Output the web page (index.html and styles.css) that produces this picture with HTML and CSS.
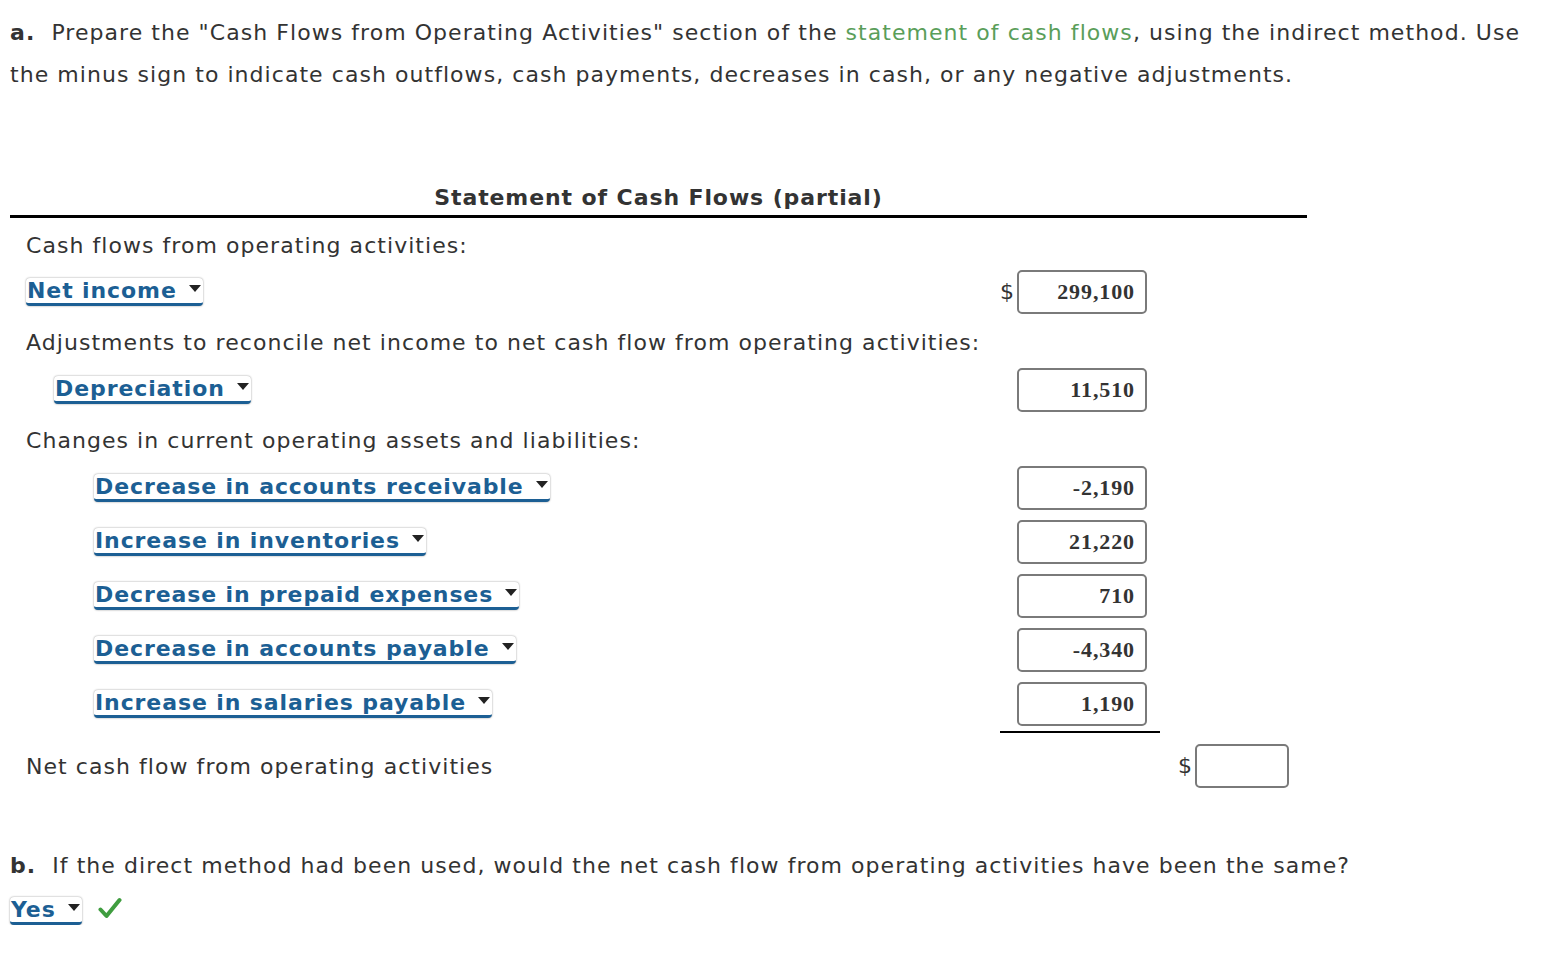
FILE: index.html
```html
<!DOCTYPE html>
<html>
<head>
<meta charset="utf-8">
<link rel="stylesheet" href="styles.css">
</head>
<body>
<div class="page">
  <p class="intro"><b>a.</b>&nbsp; Prepare the "Cash Flows from Operating Activities" section of the <span class="term">statement of cash flows</span>, using the indirect method. Use<br>the minus sign to indicate cash outflows, cash payments, decreases in cash, or any negative adjustments.</p>

  <div class="statement">
    <div class="title">Statement of Cash Flows (partial)</div>
    <div class="sheet">
      <div class="row head first"><div class="label">Cash flows from operating activities:</div></div>

      <div class="row item">
        <div class="label"><span class="dd">Net income <i class="arrow"></i></span></div>
        <div class="dollar">$</div>
        <div class="box">299,100</div>
      </div>

      <div class="row head"><div class="label">Adjustments to reconcile net income to net cash flow from operating activities:</div></div>

      <div class="row item">
        <div class="label ind1"><span class="dd">Depreciation <i class="arrow"></i></span></div>
        <div class="dollar"></div>
        <div class="box">11,510</div>
      </div>

      <div class="row head"><div class="label">Changes in current operating assets and liabilities:</div></div>

      <div class="row item">
        <div class="label ind2"><span class="dd">Decrease in accounts receivable <i class="arrow"></i></span></div>
        <div class="dollar"></div>
        <div class="box">-2,190</div>
      </div>
      <div class="row item">
        <div class="label ind2"><span class="dd">Increase in inventories <i class="arrow"></i></span></div>
        <div class="dollar"></div>
        <div class="box">21,220</div>
      </div>
      <div class="row item">
        <div class="label ind2"><span class="dd">Decrease in prepaid expenses <i class="arrow"></i></span></div>
        <div class="dollar"></div>
        <div class="box">710</div>
      </div>
      <div class="row item">
        <div class="label ind2"><span class="dd">Decrease in accounts payable <i class="arrow"></i></span></div>
        <div class="dollar"></div>
        <div class="box">-4,340</div>
      </div>
      <div class="row item last">
        <div class="label ind2"><span class="dd">Increase in salaries payable <i class="arrow"></i></span></div>
        <div class="dollar"></div>
        <div class="box">1,190</div>
      </div>
      <div class="rule"></div>

      <div class="row total">
        <div class="label">Net cash flow from operating activities</div>
        <div class="dollar"></div>
        <div class="boxspace"></div>
        <div class="gapcol"></div>
        <div class="dollar">$</div>
        <div class="box small"></div>
      </div>
    </div>
  </div>

  <p class="partb"><b>b.</b>&nbsp; If the direct method had been used, would the net cash flow from operating activities have been the same?</p>
  <div class="answer">
    <span class="dd">Yes <i class="arrow"></i></span>
    <svg class="check" width="24" height="22" viewBox="0 0 24 22"><path d="M2.5 12.5 L8.5 19 L21.5 3" fill="none" stroke="#3f9d3f" stroke-width="4" stroke-linecap="round" stroke-linejoin="round"/></svg>
  </div>
</div>
</body>
</html>
```

FILE: styles.css
```css
html, body {
  margin: 0;
  padding: 0;
  background: #fff;
}
body {
  font-family: "DejaVu Sans", Verdana, sans-serif;
  font-size: 22px;
  letter-spacing: 1.05px;
  color: #333;
}
.page {
  padding: 12px 10px 0 10px;
}
.intro {
  margin: 0;
  line-height: 42px;
  width: 1527px;
  white-space: nowrap;
}
.term {
  color: #5a9e5a;
}
.statement {
  margin-top: 88px;
  width: 1297px;
}
.title {
  text-align: center;
  font-weight: bold;
  letter-spacing: 0.9px;
  line-height: 28px;
  padding-bottom: 3px;
  border-bottom: 3px solid #000;
}
.row {
  display: grid;
  grid-template-columns: 990px 17px 130px 31px 17px 94px;
  align-items: center;
}
.row.head {
  height: 44px;
}
.row.head .label {
  padding-top: 3px;
}
.row.head.first {
  height: 47px;
}
.row.head.first .label {
  padding-top: 7px;
}
.row.item {
  height: 54px;
}
.label {
  padding-left: 16px;
  white-space: nowrap;
}
.ind1 { padding-left: 44px; }
.ind2 { padding-left: 84px; }
.dollar {
  text-align: left;
  line-height: 42px;
  letter-spacing: 0;
}
.box {
  box-sizing: border-box;
  height: 44px;
  border: 2px solid #7a7a7a;
  border-radius: 5px;
  font-family: "Liberation Serif", "Times New Roman", serif;
  font-weight: bold;
  font-size: 22px;
  letter-spacing: 0.9px;
  color: #333;
  text-align: right;
  padding-right: 10px;
  line-height: 39px;
}
.box.small {
  width: 94px;
}
.rule {
  width: 160px;
  margin-left: 990px;
  border-top: 2px solid #000;
}
.row.total {
  height: 66px;
}
.row.total .label {
  padding-top: 1px;
}
.dd {
  display: inline-flex;
  align-items: center;
  gap: 12px;
  color: #1c5f94;
  font-weight: bold;
  letter-spacing: 0.9px;
  background: #fff;
  border-radius: 4px;
  box-shadow: 0 0 2px rgba(0,0,0,0.45);
  border-bottom: 3px solid #1c5f94;
  line-height: 25px;
  padding: 0 2px 0 1px;
}
.arrow {
  display: inline-block;
  width: 0;
  height: 0;
  border-left: 6px solid transparent;
  border-right: 6px solid transparent;
  border-top: 7px solid #222;
  margin-top: -5px;
}
.partb {
  margin: 52px 0 0 0;
  line-height: 30px;
}
.answer {
  display: flex;
  align-items: center;
  gap: 16px;
  margin-top: 16px;
}
.check {
  display: block;
  margin-top: -6px;
}
```
